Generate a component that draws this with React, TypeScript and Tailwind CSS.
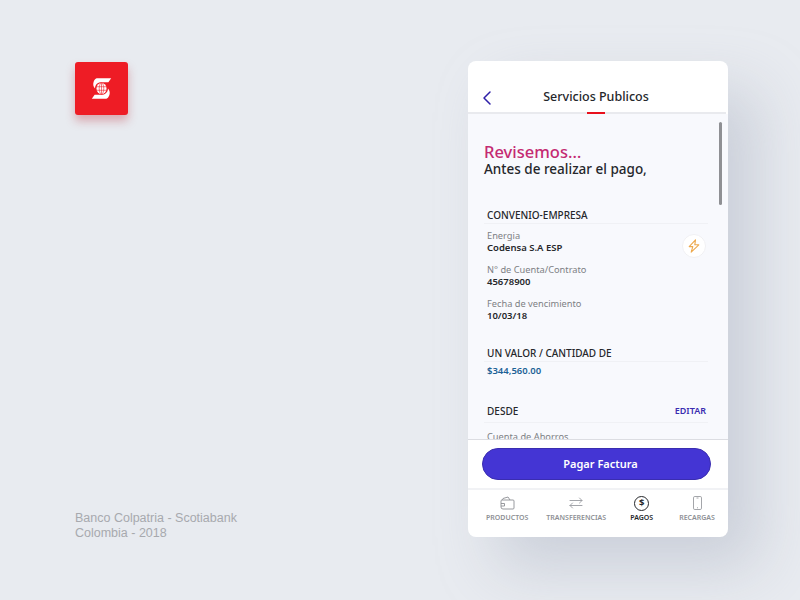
import { ChevronLeft } from 'lucide-react';

const font = "font-['Noto_Sans',sans-serif]";

const ScotiaLogo = () => (
  <svg width="21" height="23" viewBox="0 0 26 26" fill="none" preserveAspectRatio="none">
    <path d="M7 1.5H25L21.5 6H11.5C7.5 6.5 5 9.5 5 13C2.8 11 2.3 8 3.2 5.6C4 3.4 5.4 2 7 1.5Z" fill="#fff" />
    <path d="M19 24.5H1L4.5 20H14.5C18.5 19.5 21 16.5 21 13C23.2 15 23.7 18 22.8 20.4C22 22.6 20.6 24 19 24.5Z" fill="#fff" />
    <circle cx="13" cy="13" r="6.2" fill="#fff" />
    <g stroke="#ee1c25" strokeWidth="0.7" fill="none">
      <ellipse cx="13" cy="13" rx="2.8" ry="6.2" />
      <path d="M7 11H19M7 15H19M13 7V19" />
    </g>
  </svg>
);

const Field = ({ label, value }: { label: string; value: string }) => (
  <div className="flex flex-col">
    <span className="text-[9.25px] leading-[12px] text-[#7d7f84]">{label}</span>
    <span className="text-[9.5px] leading-[12px] font-semibold text-[#25272b]">{value}</span>
  </div>
);

const SectionTitle = ({ children, tall }: { children: React.ReactNode; tall?: boolean }) => (
  <div className={`flex items-start justify-between border-b border-[#f0f1f5] pl-[3px] pr-[2px] mr-[8px] ${tall ? 'h-[19px]' : 'h-[16px]'}`}>
    {children}
  </div>
);

const NavItem = ({ icon, label, active, className = '' }: { icon: React.ReactNode; label: string; active?: boolean; className?: string }) => (
  <div className={`flex flex-col items-center gap-[1px] ${className}`}>
    <div className="h-[18px] flex items-center justify-center">{icon}</div>
    <span className={`text-[7px] leading-[10px] font-semibold whitespace-nowrap ${active ? 'text-[#25272b]' : 'text-[#8d8f94]'}`}>
      {label}
    </span>
  </div>
);

export default function App() {
  return (
    <div className={`w-[800px] h-[600px] overflow-hidden bg-[#e8ebf0] flex justify-between ${font}`}>
      <div className="flex flex-col justify-between pl-[75px] pt-[62px] pb-[59px]">
        <div className="w-[53px] h-[53px] rounded-[3px] bg-[#ee1c25] flex items-center justify-center shadow-[0_6px_10px_rgba(190,50,60,0.35)]">
          <ScotiaLogo />
        </div>
        <div className="font-['Liberation_Sans',sans-serif] text-[12.5px] leading-[15px] text-[#a7a9ae]">
          <p>Banco Colpatria - Scotiabank</p>
          <p>Colombia - 2018</p>
        </div>
      </div>

      <div className="mt-[61px] mr-[72px] w-[260px] h-[476px] rounded-[8px] bg-white flex flex-col overflow-hidden shadow-[30px_30px_60px_rgba(160,168,185,0.4)]">
        <div className="relative h-[53px] shrink-0 pt-[26px] pr-[2px] border-b-2 border-[#e9eaee] flex items-start justify-center mr-[2px]">
          <ChevronLeft size={24} strokeWidth={1.5} className="absolute left-[6.5px] top-[25px] text-[#2e1fa8]" />
          <span className="text-[12.5px] leading-[20px] font-medium text-[#25272b]">Servicios Publicos</span>
          <span className="absolute left-[119px] bottom-[-2px] w-[18px] h-[2px] bg-[#e8101c]" />
        </div>

        <div className="relative flex-1 min-h-0 overflow-hidden bg-[#f8f9fd] pl-[16px] pr-[12px] pt-[27px]">
          <div className="absolute right-[6px] top-[8px] w-[3px] h-[83px] rounded-full bg-[#8f9094]" />
          <h1 className="text-[16.5px] leading-[22px] font-medium text-[#c42a72]">Revisemos…</h1>
          <h2 className="text-[13.5px] leading-[16px] font-medium text-[#25272b] -mt-[2px]">Antes de realizar el pago,</h2>

          <div className="mt-[31px]">
            <SectionTitle>
              <span className="text-[10px] leading-[14px] font-medium text-[#25272b]">CONVENIO-EMPRESA</span>
            </SectionTitle>
            <div className="relative flex flex-col gap-[10px] pl-[3px] pt-[6px]">
              <Field label="Energia" value="Codensa S.A ESP" />
              <Field label="N° de Cuenta/Contrato" value="45678900" />
              <Field label="Fecha de vencimiento" value="10/03/18" />
              <div className="absolute right-[10px] top-[10px] w-[24px] h-[24px] rounded-full bg-white border border-[#f0f0f3] flex items-center justify-center">
                <svg width="12" height="14" viewBox="0 0 12 14" fill="none" stroke="#eda94e" strokeWidth="1.1" strokeLinejoin="round">
                  <path d="M7.5 0.8L1.2 7.6H4.8L3.2 13.2L10.8 5.8H6.8L7.5 0.8Z" />
                </svg>
              </div>
            </div>
          </div>

          <div className="mt-[24px]">
            <SectionTitle>
              <span className="text-[10px] leading-[14px] font-medium text-[#25272b]">UN VALOR / CANTIDAD DE</span>
            </SectionTitle>
            <p className="pl-[3px] pt-[2px] text-[9.5px] leading-[14px] font-semibold text-[#1c6296]">$344,560.00</p>
          </div>

          <div className="mt-[26px]">
            <SectionTitle tall>
              <span className="text-[10px] leading-[14px] font-medium text-[#25272b]">DESDE</span>
              <span className="text-[9px] leading-[14px] font-semibold text-[#3a2db0]">EDITAR</span>
            </SectionTitle>
            <p className="pl-[3px] pt-[8px] text-[9.25px] leading-[12px] text-[#7d7f84]">Cuenta de Ahorros</p>
          </div>
        </div>

        <div className="shrink-0 h-[49px] border-t border-[#dcdde2] bg-white px-[14px] pt-[8px]">
          <button className="w-[229px] h-[32px] pl-[8px] rounded-full bg-[#4435d4] border border-[#3a2db0] text-white text-[11px] font-semibold">
            Pagar Factura
          </button>
        </div>

        <div className="shrink-0 h-[49px] border-t-2 border-[#f1f2f5] flex items-start pl-[18px] pt-[4px]">
          <NavItem
            label="PRODUCTOS"
            icon={
              <svg width="15" height="14" viewBox="0 0 15 14" fill="none" stroke="#8d8f94" strokeWidth="0.9" strokeLinejoin="round">
                <path d="M1 5A1 1 0 0 1 2 4H13A1 1 0 0 1 14 5V12A1 1 0 0 1 13 13H3A2 2 0 0 1 1 11V5Z" />
                <path d="M2 4L3 2.5L8 1L10 4M1 7.5H4.5V10H1" />
              </svg>
            }
          />
          <NavItem
            className="ml-[18px]"
            label="TRANSFERENCIAS"
            icon={
              <svg width="14" height="12" viewBox="0 0 14 12" fill="none" stroke="#9a9ca1" strokeWidth="0.9" strokeLinecap="round" strokeLinejoin="round">
                <path d="M1 3.5H13M10.5 1L13 3.5L10.5 6" />
                <path d="M13 8.5H1M3.5 6L1 8.5L3.5 11" />
              </svg>
            }
          />
          <NavItem
            className="ml-[24px]"
            label="PAGOS"
            active
            icon={
              <div className="w-[15px] h-[15px] rounded-full border border-[#25272b] flex items-center justify-center text-[9.5px] leading-none font-bold text-[#25272b]">
                $
              </div>
            }
          />
          <NavItem
            className="ml-[26px]"
            label="RECARGAS"
            icon={
              <svg width="9" height="14" viewBox="0 0 9 14" fill="none" stroke="#8d8f94" strokeWidth="0.8">
                <rect x="0.5" y="0.5" width="8" height="13" rx="1.3" />
                <path d="M3.5 2H5.5M4 11.8H5" />
              </svg>
            }
          />
        </div>
      </div>
    </div>
  );
}
